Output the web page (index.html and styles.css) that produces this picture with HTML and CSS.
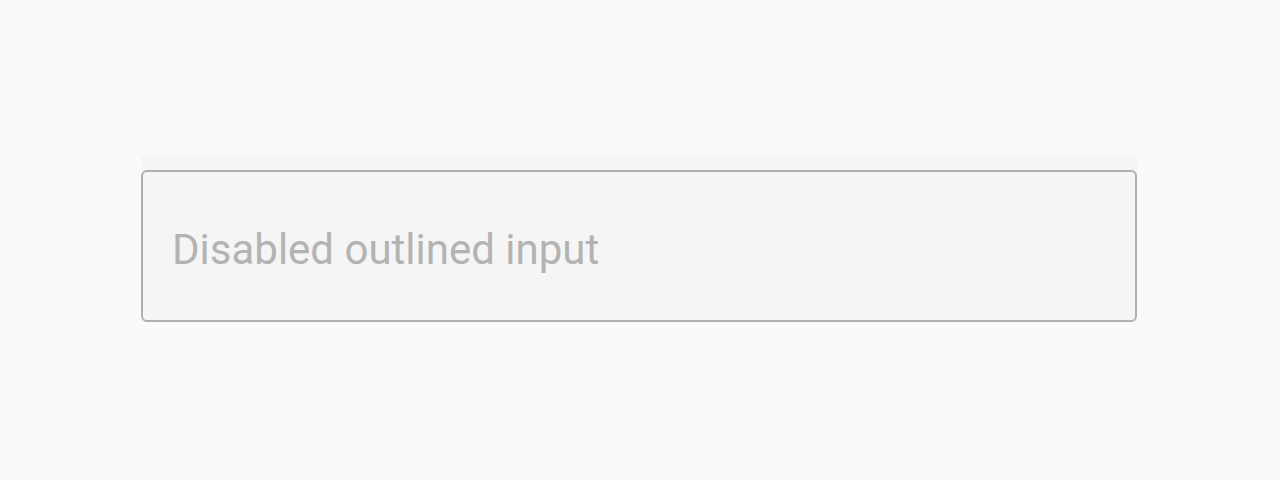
FILE: index.html
```html
<!DOCTYPE html>
<html>
<head>
  <title>Disabled outlined input</title>
  <link rel="stylesheet" href="styles.css">
</head>
<body>
  <div class="page">
    <div class="text-field">
      <input type="text" class="outlined" placeholder="Disabled outlined input" disabled>
    </div>
  </div>
</body>
</html>
```
FILE: styles.css
```css
html, body {
  margin: 0;
  height: 100%;
}
body {
  background-color: #fafafa;
  font-family: Roboto, "Noto Sans", sans-serif;
}
.page {
  height: 100%;
  display: flex;
  align-items: center;
  justify-content: center;
  padding-right: 2px;
  box-sizing: border-box;
}
.text-field {
  width: 996px;
  padding-top: 15px;
  margin-bottom: 3px;
  background-color: #f5f5f5;
}
.outlined {
  display: block;
  width: 100%;
  height: 152px;
  box-sizing: border-box;
  margin: 0;
  padding: 6px 27px 0 29px;
  border: 2px solid #b0b0b0;
  border-radius: 6px;
  background-color: #f5f5f5;
  font-family: Roboto, "Noto Sans", sans-serif;
  font-size: 42px;
  color: #b3b3b3;
  outline: none;
}
.outlined::placeholder {
  color: #b3b3b3;
  opacity: 1;
}
```
